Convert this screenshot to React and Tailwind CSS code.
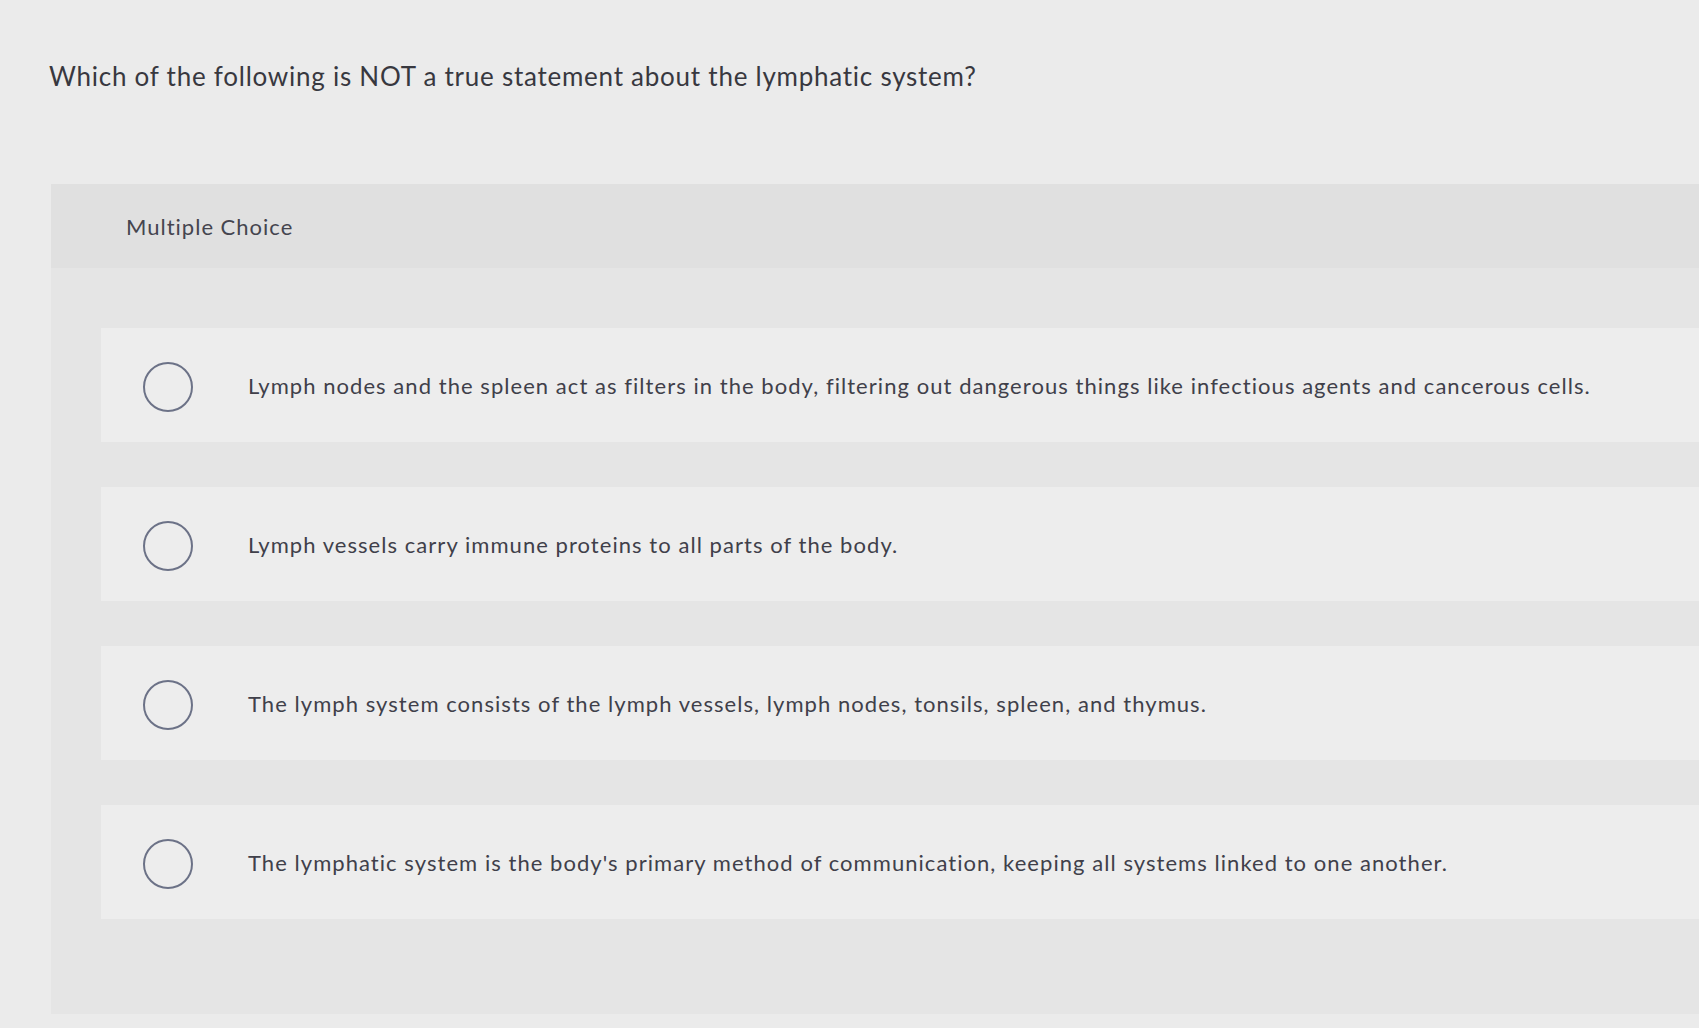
import React from 'react';

const options = [
    "Lymph nodes and the spleen act as filters in the body, filtering out dangerous things like infectious agents and cancerous cells.",
    "Lymph vessels carry immune proteins to all parts of the body.",
    "The lymph system consists of the lymph vessels, lymph nodes, tonsils, spleen, and thymus.",
    "The lymphatic system is the body's primary method of communication, keeping all systems linked to one another.",
];

const App = () => {
    return (
        <div className="min-h-screen w-full overflow-hidden bg-[#ebebeb] pl-[49px] pt-[58px] text-[#38383f]" style={{ fontFamily: 'Lato, "Open Sans", sans-serif' }}>
            <h1 className="text-[26px] leading-[36px] font-normal tracking-[0.75px]">
                Which of the following is NOT a true statement about the lymphatic system?
            </h1>

            {/* question panel, runs off the right edge */}
            <div className="mt-[90px] ml-[2px] bg-[#e5e5e5] pb-[95px]">
                <div className="h-[84px] bg-[#e0e0e0] pl-[75px] flex items-center">
                    <span className="text-[22px] tracking-[1px] text-[#45454f]">Multiple Choice</span>
                </div>

                <div className="mt-[60px] ml-[50px] flex flex-col gap-[45px]">
                    {options.map((text, i) => (
                        <label key={i} className="h-[114px] bg-[#ededed] flex items-center pl-[42px] cursor-pointer">
                            <span className="w-[50px] h-[50px] shrink-0 rounded-full border-[2.5px] border-[#6c7287] mt-[3px]"></span>
                            <span className="ml-[55px] text-[22px] tracking-[1.05px] whitespace-nowrap text-[#40404a]">{text}</span>
                        </label>
                    ))}
                </div>
            </div>
        </div>
    );
};

export default App;
